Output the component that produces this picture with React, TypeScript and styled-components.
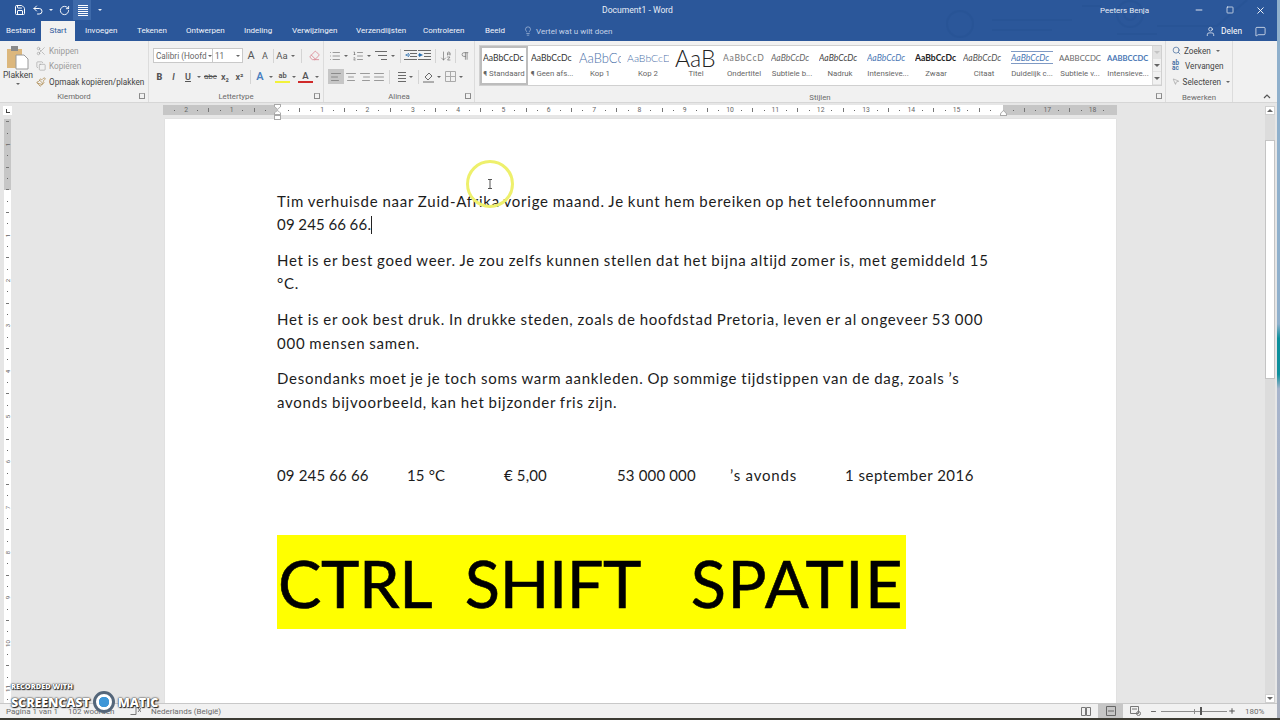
import styled, { createGlobalStyle } from 'styled-components';
import {
  AlignCenter,
  AlignJustify,
  AlignLeft,
  AlignRight,
  ArrowDownAZ,
  Copy,
  Eraser,
  Lightbulb,
  List,
  ListOrdered,
  MessageSquare,
  Minus,
  MousePointer2,
  Paintbrush,
  Pilcrow,
  Plus,
  RotateCw,
  Save,
  Scissors,
  Search,
  Square,
  Undo2,
  User,
  X,
} from 'lucide-react';

const ui = 'Roboto, "Open Sans", sans-serif';
const doc = 'Lato, "Liberation Sans", sans-serif';
const STEP = 11.338;

const GlobalStyle = createGlobalStyle`
  html, body { margin: 0; padding: 0; background: #20242a; }
  #root { width: 1280px; height: 720px; overflow: hidden; }
`;

const Screen = styled.div`
  position: relative;
  width: 1280px;
  height: 720px;
  overflow: hidden;
  font-family: ${ui};
  background: linear-gradient(180deg, #8fb0cc 0%, #8fb0cc 45%, #0d8f9c 47%, #0d8f9c 52%, #a7b4cc 54%, #aab0bd 100%);
`;

const Window = styled.div`
  width: 1277px;
  height: 718px;
  display: flex;
  flex-direction: column;
  background: #e6e6e6;
`;

const Blue = styled.header`
  position: relative;
  height: 41px;
  background: #2b579a;
  color: #fff;
  flex: none;
  overflow: hidden;
`;

const Circuit = styled.svg`
  position: absolute;
  right: 0;
  top: 0;
  opacity: 0.2;
`;

const TitleRow = styled.div`
  position: relative;
  height: 20px;
  display: flex;
  align-items: center;
`;

const Quick = styled.div`
  display: flex;
  align-items: center;
  width: 560px;
  padding-left: 11px;
  box-sizing: border-box;
`;

const QuickBtn = styled.span<{ $w: number; $on?: boolean }>`
  width: ${(p) => p.$w}px;
  height: 20px;
  display: flex;
  align-items: center;
  justify-content: center;
  background: ${(p) => (p.$on ? '#3e6aaa' : 'transparent')};
`;

const DocTitle = styled.div`
  width: 540px;
  box-sizing: border-box;
  font-size: 8.6px;
  padding-left: 42px;
  color: #e8eef7;
`;

const Account = styled.div`
  width: 52px;
  font-size: 8px;
  color: #e8eef7;
  white-space: nowrap;
`;

const WinBtn = styled.span`
  width: 31px;
  height: 20px;
  display: flex;
  align-items: center;
  justify-content: center;
`;

const TabRow = styled.nav`
  position: relative;
  height: 21px;
  display: flex;
  align-items: flex-end;
  font-size: 8px;
  padding-left: 6px;
`;

const Tab = styled.span<{ $w: number; $on?: boolean }>`
  width: ${(p) => p.$w}px;
  height: 20px;
  line-height: 20px;
  white-space: nowrap;
  flex: none;
  color: ${(p) => (p.$on ? '#2b579a' : '#f2f5fa')};
  background: ${(p) => (p.$on ? '#f1f1f1' : 'transparent')};
  text-align: ${(p) => (p.$on ? 'center' : 'left')};
`;

const Tell = styled.span`
  display: flex;
  align-items: center;
  gap: 3px;
  width: 682px;
  height: 20px;
  font-size: 8px;
  color: #c3d2e8;
  flex: none;
`;

const Share = styled.span<{ $gap?: number }>`
  display: flex;
  align-items: center;
  height: 20px;
  gap: 5px;
  font-size: 8.4px;
  margin-left: ${(p) => p.$gap ?? 0}px;
`;

const Ribbon = styled.section`
  height: 62px;
  flex: none;
  display: flex;
  background: #f1f1f1;
  border-bottom: 1px solid #d6d6d6;
  box-sizing: border-box;
  position: relative;
`;

const Group = styled.div<{ $w: number; $plain?: boolean }>`
  position: relative;
  width: ${(p) => p.$w}px;
  flex: none;
  box-sizing: border-box;
  display: flex;
  flex-direction: column;
  border-right: ${(p) => (p.$plain ? 'none' : '1px solid #dcdcdc')};
`;

const GroupBody = styled.div`
  height: 50.5px;
  box-sizing: border-box;
  padding: 7px 0 0 4px;
  display: flex;
  flex-direction: column;
  gap: 6px;
`;

const GroupLabel = styled.div<{ $top?: number }>`
  height: 11px;
  margin-top: ${(p) => p.$top ?? 0}px;
  font-size: 7.8px;
  line-height: 11px;
  color: #6a6a6a;
  text-align: center;
`;

const Launcher = styled.span`
  position: absolute;
  right: 3px;
  bottom: 3px;
  width: 4px;
  height: 4px;
  border: 1px solid #8a8a8a;
  border-top-color: #a8a8a8;
`;

const ClipBody = styled.div`
  display: flex;
  height: 50.5px;
`;

const Paste = styled.div`
  width: 36px;
  flex: none;
  display: flex;
  flex-direction: column;
  align-items: center;
  padding-top: 4px;
  box-sizing: border-box;
  font-size: 8.6px;
  color: #444;
  line-height: 11px;
`;

const ClipList = styled.div`
  display: flex;
  flex-direction: column;
  padding-top: 4px;
  gap: 4px;
`;

const ClipItem = styled.div<{ $off?: boolean }>`
  display: flex;
  align-items: center;
  gap: 3px;
  height: 11.5px;
  font-size: 8.2px;
  white-space: nowrap;
  color: ${(p) => (p.$off ? '#9b9b9b' : '#444')};
`;

const Replace = styled.span`
  display: flex;
  flex-direction: column;
  width: 10px;
  font-size: 6.4px;
  line-height: 5.5px;
  color: #3d6ba3;
  font-weight: 600;
`;

const ToolRow = styled.div`
  display: flex;
  align-items: center;
  height: 15px;
`;

const Tool = styled.span<{ $w?: number; $on?: boolean; $size?: number; $light?: boolean; $color?: string; $under?: string }>`
  width: ${(p) => p.$w ?? 14}px;
  height: ${(p) => (p.$under ? 10 : 15)}px;
  flex: none;
  display: flex;
  align-items: center;
  justify-content: center;
  font-size: ${(p) => p.$size ?? 9}px;
  font-weight: ${(p) => (p.$light ? 400 : 600)};
  color: ${(p) => p.$color ?? '#555'};
  background: ${(p) => (p.$on ? '#c6c6c6' : 'transparent')};
  border-bottom: ${(p) => (p.$under ? `2px solid ${p.$under}` : 'none')};
`;

const Sep = styled.span<{ $w: number }>`
  width: ${(p) => p.$w}px;
  flex: none;
  height: 14px;
  display: flex;
  justify-content: center;
  &::after {
    content: '';
    width: 1px;
    height: 100%;
    background: #d4d4d4;
  }
`;

const Caret = styled.span<{ $w?: number; $h?: number; $light?: boolean }>`
  width: ${(p) => p.$w ?? 8}px;
  height: ${(p) => p.$h ?? 15}px;
  flex: none;
  display: flex;
  align-items: center;
  justify-content: center;
  &::after {
    content: '';
    border-left: 2px solid transparent;
    border-right: 2px solid transparent;
    border-top: 2px solid ${(p) => (p.$light ? '#e8eef7' : '#666')};
  }
`;

const Field = styled.span<{ $w: number }>`
  width: ${(p) => p.$w}px;
  height: 15px;
  flex: none;
  box-sizing: border-box;
  display: flex;
  align-items: center;
  justify-content: space-between;
  padding: 0 1px 0 2px;
  background: #fff;
  border: 1px solid #c9c9c9;
  margin-right: -1px;
  font-size: 8.2px;
  color: #666;
  white-space: nowrap;
  overflow: hidden;
`;

const Gallery = styled.div`
  margin: 4px 0 0 4px;
  height: 41px;
  display: flex;
  box-sizing: border-box;
  border: 1px solid #d0d0d0;
  background: #fff;
  width: 683px;
`;

const StyleCard = styled.div<{ $on?: boolean }>`
  width: 48px;
  flex: none;
  box-sizing: border-box;
  height: 39px;
  display: flex;
  flex-direction: column;
  align-items: center;
  overflow: hidden;
  outline: ${(p) => (p.$on ? '2px solid #bdbdbd' : 'none')};
  outline-offset: -2px;
`;

const Sample = styled.div<{
  $size?: number;
  $color?: string;
  $italic?: boolean;
  $bold?: boolean;
  $rule?: boolean;
  $track?: number;
  $thin?: boolean;
}>`
  height: 23px;
  width: 42px;
  overflow: hidden;
  display: flex;
  align-items: center;
  justify-content: flex-start;
  white-space: nowrap;
  font-family: ${doc};
  font-size: ${(p) => p.$size ?? 8.6}px;
  letter-spacing: ${(p) => p.$track ?? 0}px;
  color: ${(p) => p.$color ?? '#555'};
  font-style: ${(p) => (p.$italic ? 'italic' : 'normal')};
  font-weight: ${(p) => (p.$thin ? 300 : p.$bold ? 700 : 400)};
  box-sizing: border-box;
  ${(p) => (p.$rule ? 'border-top: 1px solid #7f9ac4; border-bottom: 1px solid #7f9ac4; height: 13px; margin: 5px 0;' : '')}
`;

const StyleName = styled.div`
  font-size: 7.8px;
  line-height: 10px;
  color: #666;
  white-space: nowrap;
`;

const GalleryArrows = styled.div`
  flex: 1;
  display: flex;
  flex-direction: column;
  background: #f1f1f1;
  border-left: 1px solid #d8d8d8;
`;

const GalleryArrow = styled.span<{ $dim?: boolean }>`
  flex: 1;
  display: flex;
  align-items: center;
  justify-content: center;
  background: ${(p) => (p.$dim ? '#e2e2e2' : 'transparent')};
  border-bottom: 1px solid #e2e2e2;
  &::after {
    content: '';
    border-left: 3px solid transparent;
    border-right: 3px solid transparent;
    border-top: 3px solid ${(p) => (p.$dim ? '#c4c4c4' : '#666')};
  }
`;

const EditList = styled.div`
  display: flex;
  flex-direction: column;
  padding: 4px 0 0 6px;
  gap: 4px;
`;

const Collapse = styled.span`
  position: absolute;
  right: 6px;
  bottom: 3px;
  color: #555;
  display: flex;
`;

const Workspace = styled.main`
  flex: 1;
  min-height: 0;
  display: flex;
  background: #e6e6e6;
`;

const LeftGutter = styled.aside`
  width: 163px;
  flex: none;
  box-sizing: border-box;
  padding: 3px 0 0 3px;
  display: flex;
  flex-direction: column;
`;

const TabStop = styled.span`
  width: 9px;
  height: 9px;
  background: #fff;
  display: flex;
  align-items: center;
  justify-content: center;
  flex: none;
  &::after {
    content: '';
    width: 3px;
    height: 3px;
    border-left: 1px solid #444;
    border-bottom: 1px solid #444;
  }
`;

const VRuler = styled.div`
  margin: 4px 0 0 1px;
  width: 7px;
  flex: 1;
  overflow: hidden;
  background: linear-gradient(180deg, #c6c6c6 71px, #fff 71px);
`;

const VInner = styled.div`
  margin-top: -2.7px;
  display: flex;
  flex-direction: column;
`;

const VSlot = styled.span`
  height: ${STEP}px;
  flex: none;
  display: flex;
  align-items: center;
  justify-content: center;
  font-size: 6px;
  color: #666;
  & > b {
    font-weight: 400;
    transform: rotate(-90deg);
  }
`;

const Centre = styled.div`
  width: 954px;
  flex: none;
  display: flex;
  flex-direction: column;
`;

const HRuler = styled.div`
  margin-top: 2px;
  height: 10px;
  flex: none;
  display: flex;
  position: relative;
  background: linear-gradient(90deg, #c6c6c6 114px, #fff 114px, #fff 840px, #c6c6c6 840px);
`;

const HSlot = styled.span<{ $w: number }>`
  width: ${(p) => p.$w}px;
  flex: none;
  display: flex;
  align-items: center;
  justify-content: center;
  font-size: 6.8px;
  color: #666;
`;

const Dot = styled.i`
  width: 1px;
  height: 1px;
  background: #666;
`;

const Tick = styled.i`
  width: 1px;
  height: 4px;
  background: #777;
`;

const VTick = styled.i`
  width: 3px;
  height: 1px;
  background: #777;
`;

// indent markers hanging over the ruler
const Marker = styled.span<{ $left: number; $top: number; $h: number; $flip?: boolean; $point?: boolean }>`
  position: absolute;
  left: ${(p) => p.$left}px;
  top: ${(p) => p.$top}px;
  width: 7px;
  height: ${(p) => p.$h}px;
  background: #a9a9a9;
  clip-path: ${(p) =>
    p.$point
      ? p.$flip
        ? 'polygon(0 0, 100% 0, 100% 40%, 50% 100%, 0 40%)'
        : 'polygon(50% 0, 100% 60%, 100% 100%, 0 100%, 0 60%)'
      : 'none'};
  &::after {
    content: '';
    position: absolute;
    inset: 1px;
    background: #fff;
    clip-path: inherit;
  }
`;

const Page = styled.article`
  flex: 1;
  min-height: 0;
  margin: 4px 1px 0 2px;
  padding: 70.5px 0 0 112px;
  background: #fff;
  box-shadow: 0 0 1px #c8c8c8;
  overflow: hidden;
  font-family: ${doc};
  font-size: 15px;
  line-height: 23.5px;
  color: #1c1c1c;
  letter-spacing: 0.75px;
  word-spacing: -0.6px;
`;

const Para = styled.p`
  margin: 0 0 12.3px;
  white-space: nowrap;
  min-height: 23.5px;
`;

const Nums = styled.span`
  letter-spacing: 0.2px;
`;

const TextCaret = styled.span`
  display: inline-block;
  width: 1px;
  height: 18px;
  background: #222;
  vertical-align: -4px;
`;

const TabbedLine = styled.div`
  display: flex;
  padding-top: 1.5px;
  white-space: nowrap;
  word-spacing: 0;
`;

const TabCell = styled.span<{ $w: number; $track?: number }>`
  width: ${(p) => p.$w}px;
  flex: none;
  letter-spacing: ${(p) => p.$track ?? 0.15}px;
`;

const Banner = styled.div`
  width: 629px;
  height: 94px;
  margin-top: 47.5px;
  background: #ffff00;
  color: #000;
  font-size: 65px;
  line-height: 96px;
  letter-spacing: -0.4px;
  word-spacing: 0;
  -webkit-text-stroke: 0.6px #000;
  white-space: pre;
  overflow: hidden;
  box-sizing: border-box;
  padding-left: 1px;
`;

const BannerWord = styled.span<{ $gap: number; $track: number }>`
  margin-left: ${(p) => p.$gap}px;
  letter-spacing: ${(p) => p.$track}px;
`;

const RightGutter = styled.div`
  flex: 1;
  display: flex;
  justify-content: flex-end;
  padding-right: 2px;
`;

const ScrollTrack = styled.div`
  width: 10px;
  margin-top: 3px;
  background: #dcdcdc;
  display: flex;
  flex-direction: column;
`;

const ScrollBtn = styled.span<{ $up?: boolean }>`
  height: 9px;
  flex: none;
  background: #fff;
  border: 1px solid #d0d0d0;
  box-sizing: border-box;
  display: flex;
  align-items: center;
  justify-content: center;
  &::after {
    content: '';
    border-left: 3px solid transparent;
    border-right: 3px solid transparent;
    ${(p) => (p.$up ? 'border-bottom: 3px solid #666;' : 'border-top: 3px solid #666;')}
  }
`;

const ScrollThumb = styled.span`
  height: 239px;
  margin-top: 25px;
  background: #fff;
  border: 1px solid #c4c4c4;
  box-sizing: border-box;
  flex: none;
`;

const ScrollFill = styled.span`
  flex: 1;
`;

const Status = styled.footer`
  height: 15px;
  flex: none;
  display: flex;
  align-items: center;
  background: #f1f1f1;
  border-top: 1px solid #c8c8c8;
  box-sizing: border-box;
  font-size: 8px;
  color: #6a6a6a;
  white-space: nowrap;
`;

const StatusText = styled.span<{ $w: number; $pad?: number; $gap?: number }>`
  width: ${(p) => p.$w}px;
  box-sizing: border-box;
  padding-left: ${(p) => p.$pad ?? 0}px;
  margin-left: ${(p) => p.$gap ?? 0}px;
  flex: none;
`;

const ViewBtn = styled.span<{ $w: number; $on?: boolean; $gap?: number }>`
  width: ${(p) => p.$w}px;
  height: 14px;
  flex: none;
  margin-left: ${(p) => p.$gap ?? 0}px;
  display: flex;
  align-items: center;
  justify-content: center;
  background: ${(p) => (p.$on ? '#c6c6c6' : 'transparent')};
`;

const Zoom = styled.span`
  position: relative;
  width: 66px;
  height: 1px;
  flex: none;
  margin-left: 3px;
  background: #8c8c8c;
`;

const ZoomThumb = styled.i`
  position: absolute;
  left: 39px;
  top: -4px;
  width: 2px;
  height: 8px;
  background: #555;
`;

const ZoomMid = styled.i`
  position: absolute;
  left: 33px;
  top: -2px;
  width: 1px;
  height: 5px;
  background: #8c8c8c;
`;

const BottomEdge = styled.div`
  height: 2px;
  width: 100%;
  position: absolute;
  left: 0;
  bottom: 0;
  background: #3c3b33;
`;

const Spotlight = styled.div`
  position: absolute;
  left: 466px;
  top: 160px;
  width: 48px;
  height: 48px;
  box-sizing: border-box;
  border-radius: 50%;
  border: 3px solid #eef06c;
  display: flex;
  align-items: center;
  justify-content: center;
`;

const Recorded = styled.div`
  position: absolute;
  left: 11px;
  top: 681px;
  font-family: "Open Sans", sans-serif;
  font-weight: 800;
  color: #fff;
  text-shadow: 0 0 1px #222, 0 0 2px #222, 1px 1px 1px #222;
`;

const RecSmall = styled.div`
  font-size: 7.4px;
  line-height: 10px;
`;

const RecLine = styled.div`
  display: flex;
  align-items: center;
  gap: 3px;
  font-size: 12.5px;
  line-height: 19px;
  letter-spacing: -0.1px;
`;

const RecDot = styled.span`
  width: 22px;
  height: 22px;
  box-sizing: border-box;
  border-radius: 50%;
  border: 3px solid #54667a;
  background: radial-gradient(circle, #3f97d8 0 5px, #fff 5.5px);
`;

const iconGrey = '#6a6a6a';

const Lines = ({ bars, color = iconGrey }: { bars: [number, number][]; color?: string }) => (
  <svg width="12" height="11" viewBox="0 0 12 11">
    {bars.map(([x, y], n) => (
      <rect key={n} x={x} y={y} width={12 - x} height="1" fill={color} />
    ))}
  </svg>
);

const IndentIcon = ({ back }: { back?: boolean }) => (
  <svg width="13" height="11" viewBox="0 0 13 11">
    {[0, 3, 6, 9].map((y) => (
      <rect key={y} x={y === 0 || y === 9 ? 0 : 6} y={y} width={y === 0 || y === 9 ? 13 : 7} height="1" fill={iconGrey} />
    ))}
    <path d={back ? 'M5 3 1 5l4 2zM3 4.6h3v1H3z' : 'M1 3l4 2-4 2zM0 4.6h3v1H0z'} fill="#2b6fb0" />
  </svg>
);

const styles: { name: string; sample: string; props?: object; on?: boolean }[] = [
  { name: '¶ Standaard', sample: 'AaBbCcDc', on: true, props: { $color: '#333' } },
  { name: '¶ Geen afs...', sample: 'AaBbCcDc', props: { $color: '#333' } },
  { name: 'Kop 1', sample: 'AaBbCc', props: { $size: 13, $color: '#4a6fa8', $thin: true } },
  { name: 'Kop 2', sample: 'AaBbCcD', props: { $size: 10.5, $color: '#4a6fa8', $thin: true } },
  { name: 'Titel', sample: 'AaB', props: { $size: 23, $color: '#222', $thin: true } },
  { name: 'Ondertitel', sample: 'AaBbCcD', props: { $color: '#777', $track: 0.7 } },
  { name: 'Subtiele b...', sample: 'AaBbCcDc', props: { $italic: true, $color: '#666' } },
  { name: 'Nadruk', sample: 'AaBbCcDc', props: { $italic: true, $color: '#444' } },
  { name: 'Intensieve...', sample: 'AaBbCcDc', props: { $italic: true, $color: '#4a78b5' } },
  { name: 'Zwaar', sample: 'AaBbCcDc', props: { $bold: true, $color: '#222' } },
  { name: 'Citaat', sample: 'AaBbCcDc', props: { $italic: true, $color: '#555' } },
  { name: 'Duidelijk c...', sample: 'AaBbCcDc', props: { $italic: true, $color: '#4a78b5', $rule: true } },
  { name: 'Subtiele v...', sample: 'AABBCCDC', props: { $color: '#666', $size: 7.8 } },
  { name: 'Intensieve...', sample: 'AABBCCDC', props: { $bold: true, $color: '#4a78b5', $size: 7.6 } },
];

// one slot per quarter of a ruler unit, k = 0 sits on the text margin
const hSlots = Array.from({ length: 84 }, (_, n) => n - 10);
const vSlots = Array.from({ length: 52 }, (_, n) => n - 6);

const rulerMark = (k: number, vertical: boolean) => {
  if (k === 0 || (!vertical && k === 64)) return null;
  if (k % 4 === 0) {
    const label = Math.abs(k / 4);
    return vertical ? <b>{label}</b> : label;
  }
  if (k % 2 === 0) return vertical ? <VTick /> : <Tick />;
  return <Dot />;
};

const App = () => (
  <Screen>
    <GlobalStyle />
    <Window>
      <Blue>
        <Circuit width="360" height="41" viewBox="0 0 360 41" fill="none" stroke="#1d4a8a" strokeWidth="2">
          <circle cx="43" cy="24" r="13" />
          <path d="M75 20h80M75 30h60M165 6h20M240 26h60l30-26M200 34h40" />
          <circle cx="213" cy="14" r="13" />
          <circle cx="213" cy="14" r="6" />
        </Circuit>
        <TitleRow>
          <Quick>
            <QuickBtn $w={18}><Save size={12} strokeWidth={2} /></QuickBtn>
            <QuickBtn $w={18}><Undo2 size={12} strokeWidth={2} /></QuickBtn>
            <Caret $light />
            <QuickBtn $w={18}><RotateCw size={11} strokeWidth={2} /></QuickBtn>
            <QuickBtn $w={18} $on>
              <Lines color="#fff" bars={[[2, 0], [2, 2], [2, 4], [2, 6], [2, 8], [2, 10]]} />
            </QuickBtn>
            <QuickBtn $w={18}><Caret $light /></QuickBtn>
          </Quick>
          <DocTitle>Document1 - Word</DocTitle>
          <Account>Peeters Benja</Account>
          <WinBtn />
          <WinBtn><Minus size={10} /></WinBtn>
          <WinBtn><Square size={8} /></WinBtn>
          <WinBtn><X size={11} /></WinBtn>
        </TitleRow>
        <TabRow>
          <Tab $w={35}>Bestand</Tab>
          <Tab $w={34} $on>Start</Tab>
          <Tab $w={10} />
          <Tab $w={52}>Invoegen</Tab>
          <Tab $w={49}>Tekenen</Tab>
          <Tab $w={58}>Ontwerpen</Tab>
          <Tab $w={48}>Indeling</Tab>
          <Tab $w={64}>Verwijzingen</Tab>
          <Tab $w={67}>Verzendlijsten</Tab>
          <Tab $w={62}>Controleren</Tab>
          <Tab $w={38}>Beeld</Tab>
          <Tell><Lightbulb size={10} strokeWidth={1.4} /> Vertel wat u wilt doen</Tell>
          <Share><User size={11} strokeWidth={1.5} /> Delen</Share>
          <Share $gap={13}><MessageSquare size={11} strokeWidth={1.5} /></Share>
        </TabRow>
      </Blue>
      <Ribbon>
        <Group $w={149}>
          <ClipBody>
            <Paste>
              <svg width="24" height="25" viewBox="0 0 24 25">
                <rect x="1" y="4" width="15" height="19" fill="#dcb77d" />
                <rect x="5" y="1" width="7" height="5" fill="#8a8a8a" />
                <path d="M10 10h8l4 4v10H10z" fill="#fff" stroke="#9a9a9a" />
              </svg>
              Plakken
              <Caret $h={6} />
            </Paste>
            <ClipList>
              <ClipItem $off><Scissors size={10} strokeWidth={1.4} /> Knippen</ClipItem>
              <ClipItem $off><Copy size={10} strokeWidth={1.4} /> Kopiëren</ClipItem>
              <ClipItem><Paintbrush size={10} strokeWidth={1.6} color="#a57c3a" /> Opmaak kopiëren/plakken</ClipItem>
            </ClipList>
          </ClipBody>
          <GroupLabel>Klembord</GroupLabel>
          <Launcher />
        </Group>
        <Group $w={175}>
          <GroupBody>
            <ToolRow>
              <Field $w={60}>Calibri (Hoofd <Caret $w={6} /></Field>
              <Field $w={31}>11 <Caret $w={6} /></Field>
              <Tool $size={11} $light style={{ marginLeft: 2 }}>A</Tool>
              <Tool $size={9} $light>A</Tool>
              <Sep $w={3} />
              <Tool $w={14} $size={9.5} $light>Aa</Tool>
              <Caret />
              <Sep $w={9} />
              <Tool $w={16}><Eraser size={11} color="#d9838f" strokeWidth={1.8} /></Tool>
            </ToolRow>
            <ToolRow>
              <Tool $w={13}><b>B</b></Tool>
              <Tool $w={15} style={{ fontStyle: 'italic' }}>I</Tool>
              <Tool $w={14} style={{ textDecoration: 'underline' }}>U</Tool>
              <Caret />
              <Tool $w={15} $size={8} $light style={{ textDecoration: 'line-through' }}>abc</Tool>
              <Tool $w={14}>x₂</Tool>
              <Tool $w={15}>x²</Tool>
              <Sep $w={6} />
              <Tool $w={14} $size={11} $color="#4a7fc0">A</Tool>
              <Caret />
              <Tool $w={15} $size={7.5} $under="#f2f23a">ab</Tool>
              <Caret />
              <Tool $w={15} $size={9.5} $under="#d02a2a">A</Tool>
              <Caret />
            </ToolRow>
          </GroupBody>
          <GroupLabel>Lettertype</GroupLabel>
          <Launcher />
        </Group>
        <Group $w={151}>
          <GroupBody>
            <ToolRow>
              <Tool><List size={12} color={iconGrey} strokeWidth={1.3} /></Tool>
              <Caret />
              <Tool $w={15}><ListOrdered size={12} color={iconGrey} strokeWidth={1.3} /></Tool>
              <Caret />
              <Tool $w={16}><Lines bars={[[0, 1], [3, 5], [6, 9]]} /></Tool>
              <Caret />
              <Sep $w={6} />
              <Tool><IndentIcon back /></Tool>
              <Tool $w={15}><IndentIcon /></Tool>
              <Sep $w={7} />
              <Tool><ArrowDownAZ size={12} color={iconGrey} strokeWidth={1.3} /></Tool>
              <Sep $w={5} />
              <Tool><Pilcrow size={10} color={iconGrey} strokeWidth={1.6} /></Tool>
            </ToolRow>
            <ToolRow>
              <Tool $w={16} $on><AlignLeft size={12} color={iconGrey} strokeWidth={1.3} /></Tool>
              <Tool><AlignCenter size={12} color={iconGrey} strokeWidth={1.3} /></Tool>
              <Tool><AlignRight size={12} color={iconGrey} strokeWidth={1.3} /></Tool>
              <Tool><AlignJustify size={12} color={iconGrey} strokeWidth={1.3} /></Tool>
              <Sep $w={7} />
              <Tool><Lines bars={[[4, 1], [4, 4], [4, 7], [4, 10]]} /></Tool>
              <Caret />
              <Sep $w={6} />
              <Tool><svg width="13" height="12" viewBox="0 0 13 12" fill="none" stroke={iconGrey}><path d="M3 6 7 2l3 3-4 4zM1 11h11" /></svg></Tool>
              <Caret />
              <Tool><svg width="11" height="11" viewBox="0 0 11 11" fill="none" stroke="#aaa"><path d="M.5.5h10v10H.5zM5.5.5v10M.5 5.5h10" /></svg></Tool>
              <Caret />
            </ToolRow>
          </GroupBody>
          <GroupLabel>Alinea</GroupLabel>
          <Launcher />
        </Group>
        <Group $w={691}>
          <Gallery>
            {styles.map((s, n) => (
              <StyleCard key={n} $on={s.on}>
                <Sample {...s.props}>{s.sample}</Sample>
                <StyleName>{s.name}</StyleName>
              </StyleCard>
            ))}
            <GalleryArrows>
              <GalleryArrow $dim />
              <GalleryArrow />
              <GalleryArrow />
            </GalleryArrows>
          </Gallery>
          <GroupLabel $top={5.5}>Stijlen</GroupLabel>
          <Launcher />
        </Group>
        <Group $w={67}>
          <EditList>
            <ClipItem><Search size={9} color="#4a6f9f" strokeWidth={2} /> Zoeken <Caret /></ClipItem>
            <ClipItem><Replace><span>ab</span><span>ac</span></Replace> Vervangen</ClipItem>
            <ClipItem><MousePointer2 size={9} color="#777" strokeWidth={1.4} /> Selecteren <Caret /></ClipItem>
          </EditList>
          <GroupLabel $top={4}>Bewerken</GroupLabel>
        </Group>
        <Collapse>
          <svg width="8" height="6" viewBox="0 0 8 6" fill="none" stroke="#555" strokeWidth="1.2"><path d="M1 5l3-3 3 3" /></svg>
        </Collapse>
      </Ribbon>
      <Workspace>
        <LeftGutter>
          <TabStop />
          <VRuler>
            <VInner>
              {vSlots.map((k) => (
                <VSlot key={k}>{k === 0 ? <VTick /> : rulerMark(k, true)}</VSlot>
              ))}
            </VInner>
          </VRuler>
        </LeftGutter>
        <Centre>
          <HRuler>
            {hSlots.map((k, n) => (
              <HSlot key={k} $w={n === 0 ? 6.29 : STEP}>{n === 0 ? null : rulerMark(k, false)}</HSlot>
            ))}
            <Marker $left={111} $top={-1} $h={6} $point $flip />
            <Marker $left={111} $top={5} $h={5} $point />
            <Marker $left={111} $top={10} $h={5} />
            <Marker $left={837} $top={5} $h={6} $point />
          </HRuler>
          <Page>
            <Para>
              Tim verhuisde naar Zuid-Afrika vorige maand. Je kunt hem bereiken op het telefoonnummer
              <br />
              <Nums>09 245 66 66.</Nums><TextCaret />
            </Para>
            <Para>
              Het is er best goed weer. Je zou zelfs kunnen stellen dat het bijna altijd zomer is, met gemiddeld 15
              <br />
              °C.
            </Para>
            <Para>
              Het is er ook best druk. In drukke steden, zoals de hoofdstad Pretoria, leven er al ongeveer 53 000
              <br />
              000 mensen samen.
            </Para>
            <Para>
              Desondanks moet je je toch soms warm aankleden. Op sommige tijdstippen van de dag, zoals ’s
              <br />
              avonds bijvoorbeeld, kan het bijzonder fris zijn.
            </Para>
            <Para />
            <TabbedLine>
              <TabCell $w={130}>09 245 66 66</TabCell>
              <TabCell $w={97}>15 °C</TabCell>
              <TabCell $w={113}>€ 5,00</TabCell>
              <TabCell $w={113}>53 000 000</TabCell>
              <TabCell $w={115} $track={0.8}>’s avonds</TabCell>
              <TabCell $w={140} $track={0.5}>1 september 2016</TabCell>
            </TabbedLine>
            <Banner>
              CTRL{'  '}<BannerWord $gap={2} $track={-0.4}>SHIFT</BannerWord>{'   '}<BannerWord $gap={3} $track={1.4}>SPATIE</BannerWord>
            </Banner>
          </Page>
        </Centre>
        <RightGutter>
          <ScrollTrack>
            <ScrollBtn $up />
            <ScrollThumb />
            <ScrollFill />
            <ScrollBtn />
          </ScrollTrack>
        </RightGutter>
      </Workspace>
      <Status>
        <StatusText $w={68} $pad={6}>Pagina 1 van 1</StatusText>
        <StatusText $w={62}>102 woorden</StatusText>
        <StatusText $w={21}>
          <svg width="11" height="10" viewBox="0 0 11 10" fill="none" stroke="#777"><path d="M1 .5h5v9M.5 9.5H6M8 3l3 4M11 3 8 7" /></svg>
        </StatusText>
        <StatusText $w={929}>Nederlands (België)</StatusText>
        <ViewBtn $w={13} $gap={-1}>
          <svg width="10" height="10" viewBox="0 0 10 10" fill="none" stroke="#777"><path d="M.5 1.5h4v8h-4zM5.5 1.5h4v8h-4z" /></svg>
        </ViewBtn>
        <ViewBtn $w={25} $gap={6} $on>
          <svg width="10" height="10" viewBox="0 0 10 10" fill="none" stroke="#666"><path d="M.5.5h9v9h-9zM2 5h6" /></svg>
        </ViewBtn>
        <ViewBtn $w={25}>
          <svg width="11" height="10" viewBox="0 0 11 10" fill="none" stroke="#777"><path d="M.5.5h8v7h-8zM2 3h5" /><circle cx="8.5" cy="7.5" r="2" /></svg>
        </ViewBtn>
        <ViewBtn $w={10}><Minus size={7} color="#555" strokeWidth={3} /></ViewBtn>
        <Zoom><ZoomMid /><ZoomThumb /></Zoom>
        <ViewBtn $w={10}><Plus size={8} color="#555" strokeWidth={3} /></ViewBtn>
        <StatusText $w={20} $gap={8}>180%</StatusText>
      </Status>
    </Window>
    <BottomEdge />
    <Spotlight>
      <svg width="6" height="10" viewBox="0 0 6 10" fill="none" stroke="#555"><path d="M1 .5h4M3 .5v9M1 9.5h4" /></svg>
    </Spotlight>
    <Recorded>
      <RecSmall>RECORDED WITH</RecSmall>
      <RecLine>SCREENCAST <RecDot /> MATIC</RecLine>
    </Recorded>
  </Screen>
);

export default App;
